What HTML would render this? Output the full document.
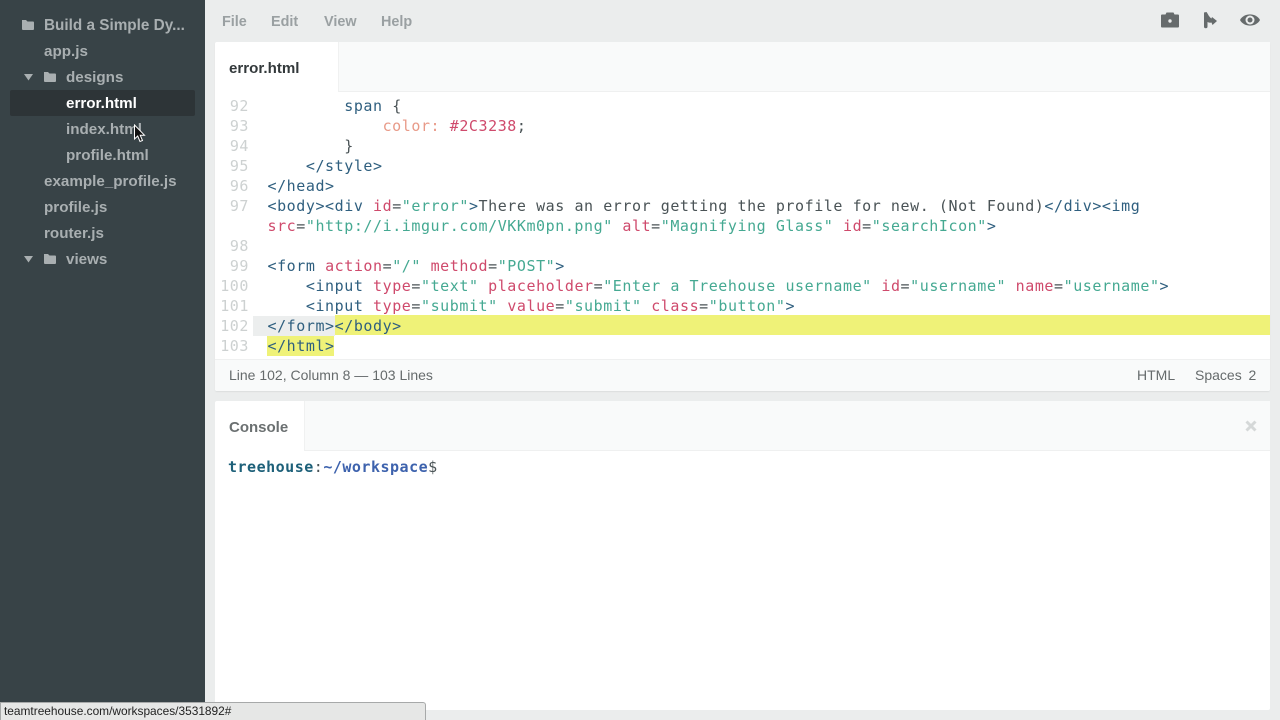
<!DOCTYPE html>
<html><head><meta charset="utf-8"><style>
html,body{margin:0;padding:0}
body{width:1280px;height:720px;overflow:hidden;background:#ebeded;position:relative;font-family:"Liberation Sans",sans-serif}
.a{position:absolute}
#side{left:0;top:0;width:205px;height:720px;background:#384347}
.f{position:absolute;font-size:15.2px;font-weight:bold;color:#a9afb1;line-height:20px;white-space:nowrap}
.m{position:absolute;font-size:14.4px;font-weight:bold;color:#9aa0a2;line-height:20px}
.c{position:absolute;left:267.5px;font:15px/20px "DejaVu Sans Mono",monospace;letter-spacing:.56px;white-space:pre;color:#4a5356}
.n{position:absolute;left:215px;width:34px;text-align:right;font:15px/20px "DejaVu Sans Mono",monospace;letter-spacing:.56px;color:#cdd1d1}
.t{color:#2f5f7f}.k{color:#cf4a6c}.s{color:#45a992}.p{color:#e89a88}
</style></head><body>
<div class="a" id="side"></div>
<svg class="a" style="left:20px;top:17px" width="16" height="16" viewBox="0 0 16 16"><path d="M2 3h4l1.500 1.500H13a1 1 0 0 1 1 1V12a1 1 0 0 1-1 1H3a1 1 0 0 1-1-1z" fill="#a9afb1"/></svg>
<div class="f" style="left:44px;top:16px;font-size:15.3px">Build a Simple Dy...</div>
<div class="f" style="left:44px;top:42px">app.js</div>
<svg class="a" style="left:24px;top:74px" width="9" height="7"><path d="M0 0h9L4.500 6.500z" fill="#a9afb1"/></svg>
<svg class="a" style="left:42px;top:69px" width="16" height="16" viewBox="0 0 16 16"><path d="M2 3h4l1.500 1.500H13a1 1 0 0 1 1 1V12a1 1 0 0 1-1 1H3a1 1 0 0 1-1-1z" fill="#a9afb1"/></svg>
<div class="f" style="left:66px;top:68px">designs</div>
<div class="a" style="left:10px;top:90px;width:185px;height:26px;background:#2d3437;border-radius:2px"></div>
<div class="f" style="left:66px;top:94px;color:#fff">error.html</div>
<div class="f" style="left:66px;top:120px">index.html</div>
<div class="f" style="left:66px;top:146px">profile.html</div>
<div class="f" style="left:44px;top:172px">example_profile.js</div>
<div class="f" style="left:44px;top:198px">profile.js</div>
<div class="f" style="left:44px;top:224px">router.js</div>
<svg class="a" style="left:24px;top:256px" width="9" height="7"><path d="M0 0h9L4.500 6.500z" fill="#a9afb1"/></svg>
<svg class="a" style="left:42px;top:251px" width="16" height="16" viewBox="0 0 16 16"><path d="M2 3h4l1.500 1.500H13a1 1 0 0 1 1 1V12a1 1 0 0 1-1 1H3a1 1 0 0 1-1-1z" fill="#a9afb1"/></svg>
<div class="f" style="left:66px;top:250px">views</div>

<div class="m" style="left:222px;top:12px">File</div>
<div class="m" style="left:271px;top:12px">Edit</div>
<div class="m" style="left:324px;top:12px">View</div>
<div class="m" style="left:381px;top:12px">Help</div>
<svg class="a" style="left:1160px;top:11px" width="20" height="18" viewBox="0 0 20 18"><path d="M2 3.500h3.500L6.500 1.500h7l1 2H18a1 1 0 0 1 1 1v11a1 1 0 0 1-1 1H2a1 1 0 0 1-1-1v-11a1 1 0 0 1 1-1z" fill="#666b6c"/><circle cx="10" cy="10" r="1.700" fill="#ebeded"/></svg>
<svg class="a" style="left:1202px;top:11px" width="16" height="18" viewBox="0 0 16 18"><path d="M2 1.500L4.500 1C6 3 7 6 9.500 7.500L10 6l5 4-4.500 4-1-2.500C8 12 6.500 11.500 5.500 11v4.500a1.700 1.700 0 0 1-3.500 0z" fill="#666b6c"/></svg>
<svg class="a" style="left:1240px;top:11px" width="20" height="18" viewBox="0 0 20 18"><path d="M0 9c4-7.500 16-7.500 20 0-4 7.500-16 7.500-20 0z" fill="#666b6c"/><circle cx="10" cy="9" r="4.500" fill="#ebeded"/><circle cx="10" cy="9" r="2.500" fill="#666b6c"/></svg>

<div class="a" style="left:215px;top:42px;width:1055px;height:349px;background:#fff;border-radius:2px;box-shadow:0 1px 1px #dcdfdf"></div>
<div class="a" style="left:338px;top:42px;width:931px;height:49px;background:#f9fafa;border-left:1px solid #f0f1f1;border-bottom:1px solid #eff0f0"></div>
<div class="a" style="left:229px;top:59px;font-size:15.100px;font-weight:bold;line-height:20px;color:#33393b">error.html</div>

<div class="a" style="left:253px;top:316px;width:82px;height:20px;background:#eceeee"></div>
<div class="a" style="left:335px;top:315px;width:935px;height:20px;background:#eff278"></div>
<div class="a" style="left:267px;top:336px;width:67px;height:20px;background:#eff278"></div>

<div class="n" style="top:96px">92</div>
<div class="n" style="top:116px">93</div>
<div class="n" style="top:136px">94</div>
<div class="n" style="top:156px">95</div>
<div class="n" style="top:176px">96</div>
<div class="n" style="top:196px">97</div>
<div class="n" style="top:236px">98</div>
<div class="n" style="top:256px">99</div>
<div class="n" style="top:276px">100</div>
<div class="n" style="top:296px">101</div>
<div class="n" style="top:316px">102</div>
<div class="n" style="top:336px">103</div>

<div class="c" style="top:96px">        <span class="t">span</span> {</div>
<div class="c" style="top:116px">            <span class="p">color:</span> <span class="k">#2C3238</span>;</div>
<div class="c" style="top:136px">        }</div>
<div class="c" style="top:156px">    <span class="t">&lt;/style&gt;</span></div>
<div class="c" style="top:176px"><span class="t">&lt;/head&gt;</span></div>
<div class="c" style="top:196px"><span class="t">&lt;body&gt;&lt;div</span> <span class="k">id</span>=<span class="s">"error"</span><span class="t">&gt;</span>There was an error getting the profile for new. (Not Found)<span class="t">&lt;/div&gt;&lt;img</span></div>
<div class="c" style="top:216px"><span class="k">src</span>=<span class="s">"http://i.imgur.com/VKKm0pn.png"</span> <span class="k">alt</span>=<span class="s">"Magnifying Glass"</span> <span class="k">id</span>=<span class="s">"searchIcon"</span><span class="t">&gt;</span></div>
<div class="c" style="top:256px"><span class="t">&lt;form</span> <span class="k">action</span>=<span class="s">"/"</span> <span class="k">method</span>=<span class="s">"POST"</span><span class="t">&gt;</span></div>
<div class="c" style="top:276px">    <span class="t">&lt;input</span> <span class="k">type</span>=<span class="s">"text"</span> <span class="k">placeholder</span>=<span class="s">"Enter a Treehouse username"</span> <span class="k">id</span>=<span class="s">"username"</span> <span class="k">name</span>=<span class="s">"username"</span><span class="t">&gt;</span></div>
<div class="c" style="top:296px">    <span class="t">&lt;input</span> <span class="k">type</span>=<span class="s">"submit"</span> <span class="k">value</span>=<span class="s">"submit"</span> <span class="k">class</span>=<span class="s">"button"</span><span class="t">&gt;</span></div>
<div class="c" style="top:316px"><span class="t">&lt;/form&gt;&lt;/body&gt;</span></div>
<div class="c" style="top:336px"><span class="t">&lt;/html&gt;</span></div>

<div class="a" style="left:215px;top:359px;width:1055px;height:32px;background:#f9fafa;border-top:1px solid #eff0f0;box-sizing:border-box;border-radius:0 0 2px 2px"></div>
<div class="a" style="left:229px;top:365px;font-size:14px;line-height:20px;color:#666b6c">Line 102, Column 8 — 103 Lines</div>
<div class="a" style="left:1137px;top:365px;font-size:14px;line-height:20px;color:#666b6c">HTML</div>
<div class="a" style="left:1195px;top:365px;font-size:14px;line-height:20px;color:#666b6c">Spaces</div>
<div class="a" style="left:1248.500px;top:365px;font-size:14px;line-height:20px;color:#666b6c">2</div>

<div class="a" style="left:215px;top:401px;width:1055px;height:309px;background:#fff;border-radius:2px"></div>
<div class="a" style="left:304px;top:401px;width:965px;height:49px;background:#f9fafa;border-left:1px solid #f0f1f1;border-bottom:1px solid #eff0f0"></div>
<div class="a" style="left:229px;top:418px;font-size:15px;font-weight:bold;line-height:20px;color:#6b7071">Console</div>
<svg class="a" style="left:1245px;top:420px" width="12" height="12"><path d="M1.500 1.500l9 9M10.500 1.500l-9 9" stroke="#d5d8d8" stroke-width="3"/></svg>
<div class="a" style="left:228px;top:457px;font:bold 15px/20px 'DejaVu Sans Mono',monospace;letter-spacing:.5px;white-space:pre;color:#1d6079">treehouse<span style="color:#4a5356;font-weight:normal">:</span><span style="color:#3d62ad">~/workspace</span><span style="color:#4a5356;font-weight:normal">$</span></div>

<div class="a" style="left:0;top:702px;width:426px;height:18px;background:#e6e7e6;border:1px solid #a7a9a9;border-bottom:none;box-sizing:border-box;border-radius:0 3px 0 0;padding-left:3px;font-size:11.9px;line-height:16px;color:#222;white-space:nowrap">teamtreehouse.com/workspaces/3531892#</div>
<svg class="a" style="left:133px;top:124px" width="13" height="19" viewBox="0 0 13 19"><path d="M1.500 1v14l3.200-3 2.300 5.500 2.500-1-2.300-5.300h4.300z" fill="#111" stroke="#fff" stroke-width="1"/></svg>
</body></html>
